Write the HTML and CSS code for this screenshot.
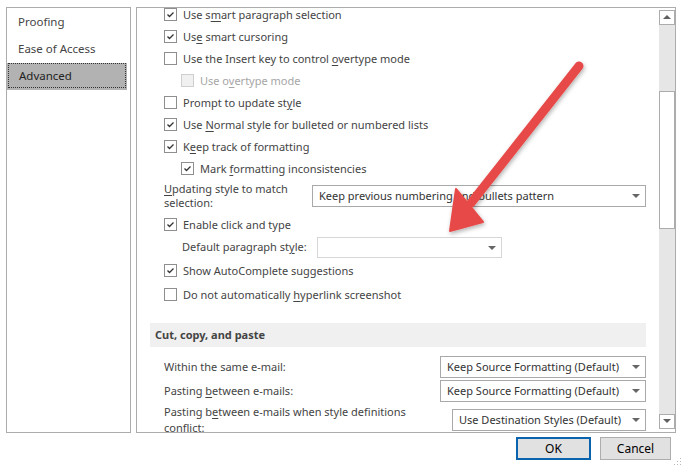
FILE: index.html
```html
<!DOCTYPE html>
<html lang="en">
<head>
    <meta charset="UTF-8">
    <title>Outlook Options - Advanced</title>
    <link rel="stylesheet" href="styles.css">
</head>
<body>
    <div class="dialog">
        <div class="panes">
            <ul class="nav">
                <li>Proofing</li>
                <li>Ease of Access</li>
                <li class="selected"><span>Advanced</span></li>
            </ul>

            <div class="options">
                <div class="content">
                    <div class="list">
                        <div class="row"><span class="box checked"></span><span>Use s<u>m</u>art paragraph selection</span></div>
                        <div class="row"><span class="box checked"></span><span>Us<u>e</u> smart cursoring</span></div>
                        <div class="row"><span class="box"></span><span>Use the Insert key to control <u>o</u>vertype mode</span></div>
                        <div class="row sub disabled"><span class="box"></span><span>Use o<u>v</u>ertype mode</span></div>
                        <div class="row"><span class="box"></span><span>Prompt to update st<u>y</u>le</span></div>
                        <div class="row"><span class="box checked"></span><span>Use <u>N</u>ormal style for bulleted or numbered lists</span></div>
                        <div class="row"><span class="box checked"></span><span>K<u>e</u>ep track of formatting</span></div>
                        <div class="row sub"><span class="box checked"></span><span>Mark <u>f</u>ormatting inconsistencies</span></div>

                        <div class="field tall">
                            <label class="field-label w148"><u>U</u>pdating style to match<br>selection:</label>
                            <div class="select wide">Keep previous numbering and bullets pattern</div>
                        </div>

                        <div class="row"><span class="box checked"></span><span>Enable click and type</span></div>

                        <div class="field para">
                            <label class="field-label w135">Default paragraph st<u>y</u>le:</label>
                            <div class="select dim w155"></div>
                        </div>

                        <div class="row"><span class="box checked"></span><span>Show AutoComplete suggestions</span></div>
                        <div class="row gap"><span class="box"></span><span>Do not automatically <u>h</u>yperlink screenshot</span></div>

                        <div class="section">Cut, copy, and paste</div>

                        <div class="field paste first">
                            <label class="field-label">Within the same e-mail:</label>
                            <div class="select w176">Keep Source Formatting (Default)</div>
                        </div>
                        <div class="field paste">
                            <label class="field-label">Pasting <u>b</u>etween e-mails:</label>
                            <div class="select w176">Keep Source Formatting (Default)</div>
                        </div>
                        <div class="field paste two-line">
                            <label class="field-label">Pasting b<u>e</u>tween e-mails when style definitions<br>conflict:</label>
                            <div class="select w164">Use Destination Styles (Default)</div>
                        </div>
                    </div>
                </div>

                <div class="scrollbar">
                    <div class="sb-btn up"></div>
                    <div class="sb-track"><div class="sb-thumb"></div></div>
                    <div class="sb-btn down"></div>
                </div>
            </div>
        </div>

        <div class="buttons">
            <button class="btn default">OK</button>
            <button class="btn">Cancel</button>
        </div>
    </div>

    <div class="grip"></div>

    <svg class="arrow" width="682" height="466" viewBox="0 0 682 466">
        <defs>
            <filter id="shadow" x="-20%" y="-20%" width="140%" height="140%">
                <feDropShadow dx="1" dy="2" stdDeviation="2" flood-color="#000" flood-opacity="0.3"/>
            </filter>
        </defs>
        <g filter="url(#shadow)" fill="#e64a47" stroke="#e64a47">
            <line x1="579" y1="66" x2="471" y2="203" stroke-width="9" stroke-linecap="round"/>
            <polygon points="450,231 483,222 456,189" stroke-width="2" stroke-linejoin="round"/>
        </g>
    </svg>
</body>
</html>
```

FILE: styles.css
```css
body {
    margin: 0;
    width: 682px;
    height: 466px;
    overflow: hidden;
    position: relative;
    background-color: #fff;
    font-family: "Noto Sans", "Open Sans", sans-serif;
    font-size: 11px;
    color: #444;
}

u {
    text-decoration-thickness: 1px;
    text-underline-offset: 2px;
}

.panes {
    display: flex;
    padding: 7px 0 0 6px;
    height: 426px;
}

/* left category list */
.nav {
    list-style: none;
    margin: 0;
    padding: 0;
    width: 123px;
    border: 1px solid #acacac;
    font-size: 11.5px;
}

.nav li {
    height: 27px;
    line-height: 27px;
    padding-left: 11px;
}

.nav li.selected {
    padding-left: 0;
    margin-right: 3px;
    background-color: #b2b2b2;
    color: #222;
}

.nav li.selected span {
    display: block;
    height: 23px;
    line-height: 23px;
    margin: 1px;
    padding-left: 10px;
    border: 1px dotted #333;
}

/* right options pane */
.options {
    display: flex;
    margin-left: 5px;
    width: 538px;
    border: 1px solid #acacac;
}

.content {
    flex: 1;
    overflow: hidden;
    padding: 0 13px;
}

.list {
    margin-top: -5px;
}

.row {
    display: flex;
    align-items: center;
    height: 22px;
    margin-left: 14px;
    white-space: nowrap;
}

.row.sub {
    margin-left: 31px;
}

.row.gap {
    margin-top: 2px;
}

.row.disabled {
    color: #a6a6a6;
}

.box {
    width: 11px;
    height: 11px;
    border: 1px solid #8e8e8e;
    background: #fff;
    margin-right: 6px;
    flex-shrink: 0;
}

.box.checked {
    background: #fff url("data:image/svg+xml,%3Csvg xmlns='http://www.w3.org/2000/svg' width='11' height='11'%3E%3Cpath d='M2.5 5.5l2 2 4-4' fill='none' stroke='%23333' stroke-width='1.3'/%3E%3C/svg%3E") no-repeat center;
}

.disabled .box {
    border-color: #cfcfcf;
    background-color: #f0f0f0;
}

.field {
    display: flex;
    align-items: center;
    margin-left: 14px;
}

.field.tall {
    height: 34px;
}

.field.para {
    height: 24px;
    margin-left: 32px;
}

.field.paste {
    height: 24px;
    justify-content: space-between;
}

.field.paste.first {
    margin-top: 8px;
}

.field.two-line {
    height: 33px;
}

.field-label {
    line-height: 14px;
}

.two-line .field-label {
    line-height: 16px;
}

.w148 { width: 148px; flex-shrink: 0; }
.w135 { width: 135px; flex-shrink: 0; }

.select {
    position: relative;
    height: 20px;
    line-height: 20px;
    border: 1px solid #a9a9a9;
    padding: 0 22px 0 6px;
    color: #333;
    white-space: nowrap;
}

.select::after {
    content: "";
    position: absolute;
    right: 5px;
    top: 8px;
    border-left: 4px solid transparent;
    border-right: 4px solid transparent;
    border-top: 4px solid #666;
}

.select.wide { flex: 1; }
.select.dim { border-color: #d6d6d6; height: 19px; }
.w155 { width: 155px; }
.w176 { width: 176px; }
.w164 { width: 164px; }

.section {
    margin-top: 18px;
    height: 24px;
    line-height: 24px;
    padding-left: 5px;
    background-color: #f0f0f0;
    font-weight: bold;
}

/* scrollbar */
.scrollbar {
    width: 16px;
    display: flex;
    flex-direction: column;
    padding: 2px 0 3px 0;
}

.sb-btn {
    position: relative;
    height: 13px;
    border: 1px solid #acacac;
    background: #fff;
}

.sb-btn::after {
    content: "";
    position: absolute;
    left: 3px;
    top: 4px;
    border-left: 4px solid transparent;
    border-right: 4px solid transparent;
}

.sb-btn.up::after {
    border-bottom: 4px solid #606060;
}

.sb-btn.down::after {
    border-top: 4px solid #606060;
}

.sb-track {
    flex: 1;
    background-color: #e6e6e6;
}

.sb-thumb {
    margin-top: 66px;
    height: 136px;
    border: 1px solid #acacac;
    background: #fff;
}

/* dialog buttons */
.buttons {
    display: flex;
    justify-content: flex-end;
    gap: 9px;
    padding: 4px 11px 0 0;
}

.btn {
    height: 23px;
    width: 71px;
    padding: 0;
    font-family: inherit;
    font-size: 12px;
    color: #000;
    background-color: #e1e1e1;
    border: 1px solid #adadad;
}

.btn.default {
    width: 75px;
    border: 2px solid #0a64ad;
}

.grip {
    position: absolute;
    right: 1px;
    bottom: 1px;
    width: 8px;
    height: 8px;
    background-image: radial-gradient(circle, #b8b8b8 0.8px, transparent 1px);
    background-size: 3px 3px;
    clip-path: polygon(100% 0, 100% 100%, 0 100%);
}

.arrow {
    position: absolute;
    left: 0;
    top: 0;
    pointer-events: none;
}
```
